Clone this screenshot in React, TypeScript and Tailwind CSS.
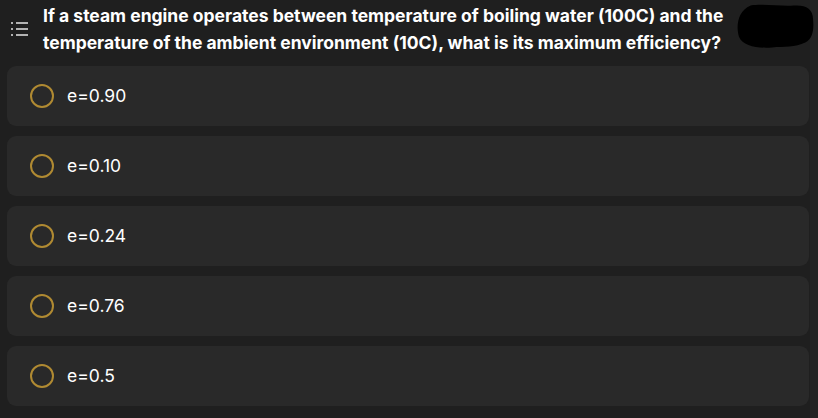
import React from 'react';

const options = ['e=0.90', 'e=0.10', 'e=0.24', 'e=0.76', 'e=0.5'];

function ListIcon() {
  return (
    <svg width="20" height="16" viewBox="0 0 20 16" fill="none" className="shrink-0">
      <circle cx="2" cy="2" r="1" fill="#e5e5e5" />
      <circle cx="2" cy="8" r="1" fill="#e5e5e5" />
      <circle cx="2" cy="14" r="1" fill="#e5e5e5" />
      <path d="M6 2h12M6 8h12M6 14h12" stroke="#e5e5e5" strokeWidth="1.3" />
    </svg>
  );
}

function Redacted() {
  return (
    <svg width="78" height="46" viewBox="0 0 80 46" className="shrink-0">
      <path
        d="M14 2 C26 0 46 3 58 2 C70 1 78 5 78 16 C79 26 78 36 70 40 C60 45 48 44 36 45 C22 46 6 44 2 34 C-1 24 0 8 14 2 Z"
        fill="#000"
      />
    </svg>
  );
}

export default function App() {
  return (
    <div
      className="flex h-[418px] w-[818px] bg-[#1f1f1f] text-white"
      style={{ fontFamily: 'Inter, "Liberation Sans", sans-serif' }}
    >
      <div className="flex min-w-0 flex-1 flex-col pl-[7px] pr-[1px]">
        <div className="flex h-[66px] items-start">
          <div className="flex h-[58px] items-center pl-[3px] pr-[13px]">
            <ListIcon />
          </div>
          <p className="w-[690px] shrink-0 pt-[2px] text-[17.5px] leading-[27px] font-bold text-white">
            If a steam engine operates between temperature of boiling water (100C) and the temperature of the
            ambient environment (10C), what is its maximum efficiency?
          </p>
          <div className="relative z-10 ml-auto mr-[-6px] pt-[3px]">
            <Redacted />
          </div>
        </div>
        <div className="flex flex-col gap-[10px]">
          {options.map((o) => (
            <div key={o} className="flex h-[60px] items-center gap-[13px] rounded-[9px] bg-[#292929] pl-[23px]">
              <span className="h-[24px] w-[24px] rounded-full border-[2.5px] border-[#b08a32]" />
              <span className="text-[17.5px] text-white">{o}</span>
            </div>
          ))}
        </div>
      </div>
      <div className="w-[8px] shrink-0 bg-[#242424]" />
    </div>
  );
}
